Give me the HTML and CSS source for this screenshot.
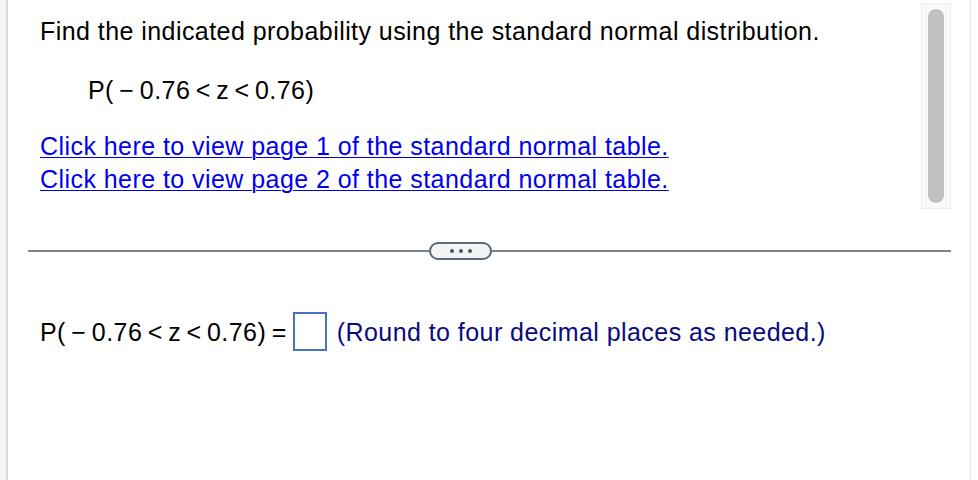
FILE: index.html
```html
<!DOCTYPE html>
<html>
<head>
<meta charset="utf-8">
<link rel="stylesheet" href="styles.css">
</head>
<body>
<div class="frame">
  <div class="top">
    <div class="question">
      <p class="prompt">Find the indicated probability using the standard normal distribution.</p>
      <p class="expr">P(&#8201;&minus;&#8201;0.76&#8201;&lt;&#8201;z&#8201;&lt;&#8201;0.76)</p>
      <div class="links">
        <a href="#">Click here to view page 1 of the standard normal table.</a>
        <a href="#">Click here to view page 2 of the standard normal table.</a>
      </div>
    </div>
    <div class="scroll"><div class="thumb"></div></div>
  </div>
  <div class="divider">
    <span class="line left"></span>
    <button class="more"><i></i><i></i><i></i></button>
    <span class="line"></span>
  </div>
  <div class="answer">
    <span class="expr2">P(&#8201;&minus;&#8201;0.76&#8201;&lt;&#8201;z&#8201;&lt;&#8201;0.76)&#8201;=</span>
    <span class="box"></span>
    <span class="hint">(Round to four decimal places as needed.)</span>
  </div>
</div>
</body>
</html>
```
FILE: styles.css
```css
html, body {
  margin: 0;
  padding: 0;
  background: #fff;
}
body {
  width: 978px;
  height: 480px;
  overflow: hidden;
  font-family: "Liberation Sans", Arial, sans-serif;
  color: #000;
  font-size: 25px;
  letter-spacing: 0.44px;
}
.frame {
  height: 480px;
  margin-left: 6px;
  width: 965px;
  border-left: 2px solid #d3d5e2;
  border-right: 1px solid #e6e6e6;
  box-sizing: border-box;
  box-shadow: -6px 0 0 #f4f4f4;
}
.top {
  display: flex;
  justify-content: space-between;
  height: 222px;
}
.question {
  padding-left: 32px;
  padding-top: 16px;
}
.prompt {
  margin: 0;
  line-height: 30px;
  white-space: nowrap;
}
.expr {
  margin: 29px 0 0 48px;
  line-height: 30px;
}
.links {
  display: flex;
  flex-direction: column;
  align-items: flex-start;
  margin-top: 25px;
}
.links a {
  color: #0000ee;
  line-height: 33px;
  text-decoration: underline;
  text-underline-offset: 2px;
  text-decoration-thickness: 1px;
}
.scroll {
  margin: 3px 19px 0 0;
  width: 30px;
  height: 206px;
  box-sizing: border-box;
  background: #f9f9f9;
  border: 1px solid #ececec;
  padding: 5px 6px;
  flex-shrink: 0;
}
.thumb {
  width: 16px;
  height: 194px;
  border-radius: 8px;
  background: #c1c1c1;
}
.divider {
  display: flex;
  align-items: center;
  margin-top: 20px;
  padding-left: 20px;
  padding-right: 19px;
}
.line {
  flex: 1;
  height: 2px;
  background: #7b8390;
}
.line.left {
  flex: 0 0 401px;
}
.more {
  width: 63px;
  height: 18px;
  border: 2px solid #5e6978;
  border-radius: 9px;
  background: #f3f4f6;
  display: flex;
  align-items: center;
  justify-content: center;
  gap: 5px;
  padding: 0;
  margin: 0;
}
.more i {
  width: 4px;
  height: 4px;
  border-radius: 50%;
  background: #4b5563;
}
.answer {
  display: flex;
  align-items: center;
  padding-left: 32px;
  margin-top: 52px;
}
.expr2 {
  line-height: 30px;
}
.box {
  width: 34px;
  height: 39px;
  box-sizing: border-box;
  border: 2px solid #4a70c6;
  margin-left: 6px;
  margin-right: 10px;
}
.hint {
  color: #0a0a80;
  line-height: 30px;
}
```
